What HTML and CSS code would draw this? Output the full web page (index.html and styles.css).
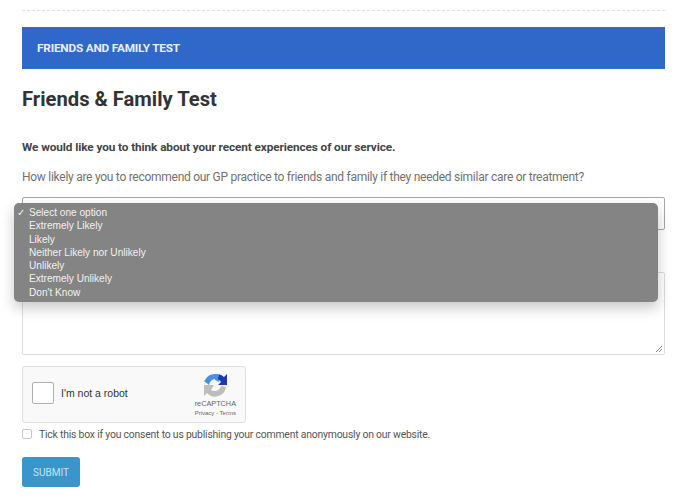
FILE: index.html
```html
<!DOCTYPE html>
<html lang="en">
<head>
  <meta charset="UTF-8">
  <title>Friends and Family Test</title>
  <link rel="stylesheet" href="styles.css">
</head>
<body>
  <div class="page">
    <div class="divider"></div>
    <div class="banner">FRIENDS AND FAMILY TEST</div>
    <h1>Friends &amp; Family Test</h1>
    <p class="intro">We would like you to think about your recent experiences of our service.</p>
    <p class="question">How likely are you to recommend our GP practice to friends and family if they needed similar care or treatment?</p>

    <div class="select-wrap">
      <div class="select-box"></div>
      <!-- native select menu, open -->
      <ul class="menu">
        <li class="checked">Select one option</li>
        <li>Extremely Likely</li>
        <li>Likely</li>
        <li>Neither Likely nor Unlikely</li>
        <li>Unlikely</li>
        <li>Extremely Unlikely</li>
        <li>Don't Know</li>
      </ul>
    </div>

    <div class="comment">
      <svg class="grip" width="8" height="8" viewBox="0 0 8 8">
        <path d="M1 7 L7 1 M4 7 L7 4" stroke="#8a8a8a" stroke-width="1" fill="none"/>
      </svg>
    </div>

    <div class="captcha">
      <span class="captcha-box"></span>
      <span class="captcha-label">I'm not a robot</span>
      <div class="captcha-brand">
        <svg width="24" height="24" viewBox="0 0 24 24">
          <path d="M12 1 A11 11 0 0 0 2 7 L1 8 L6 12 A6.5 6.5 0 0 1 12 6 L12 7 L16 9 L17 6 L20 3 A11 11 0 0 0 12 1 Z" fill="#4a90e2"/>
          <path d="M15 6 A7 7 0 0 1 18 9 L15 12 H24 V1 L21 4 A11 11 0 0 0 16 1.5 Z" fill="#1c3aa9"/>
          <path d="M1 12 V23 L4 20 A11 11 0 0 0 23 14 L18 13 A6.5 6.5 0 0 1 8 17 L11 12 Z" fill="#bdbdbd"/>
        </svg>
        <span class="brand-name">reCAPTCHA</span>
        <span class="brand-links">Privacy - Terms</span>
      </div>
    </div>

    <label class="consent">
      <span class="tick"></span>
      Tick this box if you consent to us publishing your comment anonymously on our website.
    </label>

    <button class="submit">SUBMIT</button>
  </div>
</body>
</html>
```

FILE: styles.css
```css
html, body {
  margin: 0;
  padding: 0;
  background: #fff;
}

body {
  font-family: "Roboto", "Liberation Sans", sans-serif;
  color: #333;
}

.page {
  padding: 10px 23px 0 22px;
  height: 489px;
  overflow: hidden;
}

.divider {
  border-top: 1px dashed #e2e2e2;
}

.banner {
  margin-top: 16px;
  height: 42px;
  line-height: 43px;
  padding-left: 15px;
  background: #3068c9;
  color: #e6eefb;
  font-size: 11.8px;
  font-weight: 700;
  letter-spacing: -0.2px;
}

h1 {
  margin: 17px 0 0 0;
  font-size: 20.2px;
  line-height: 26px;
  font-weight: 700;
  color: #333;
}

.intro {
  margin: 27px 0 0 0;
  font-size: 11.8px;
  line-height: 16px;
  font-weight: 700;
  letter-spacing: -0.1px;
  color: #444;
}

.question {
  margin: 14px 0 0 0;
  font-size: 12px;
  line-height: 16px;
  letter-spacing: -0.27px;
  color: #717171;
}

.select-wrap {
  position: relative;
  margin-top: 12px;
}

.select-box {
  height: 31px;
  border: 1px solid #a8a8a8;
  border-radius: 2px;
}

.menu {
  position: absolute;
  left: -8px;
  top: 6px;
  width: 644px;
  height: 99px;
  box-sizing: border-box;
  margin: 0;
  padding: 3px 0 0 15px;
  list-style: none;
  background: #848484;
  border-radius: 5px;
  box-shadow: 0 6px 14px rgba(0, 0, 0, 0.22);
  color: #f2f2f2;
  font-family: "Liberation Sans", sans-serif;
  font-size: 10.1px;
  line-height: 13.3px;
  z-index: 2;
}

.menu .checked {
  position: relative;
}

.menu .checked::before {
  content: "✓";
  position: absolute;
  left: -12px;
  font-family: "DejaVu Sans", sans-serif;
  font-size: 10px;
  font-weight: 700;
}

.comment {
  position: relative;
  margin-top: 42px;
  height: 81px;
  border: 1px solid #dcdcdc;
  border-radius: 2px;
}

.grip {
  position: absolute;
  right: 1px;
  bottom: 1px;
}

.captcha {
  display: flex;
  align-items: center;
  margin-top: 11px;
  width: 224px;
  height: 57px;
  box-sizing: border-box;
  border: 1px solid #dfdfdf;
  border-radius: 3px;
  background: #f9f9f9;
  padding: 0 9px 3px 9px;
}

.captcha-box {
  width: 20px;
  height: 20px;
  border: 1px solid #b0b0b0;
  border-radius: 2px;
  background: #fff;
}

.captcha-label {
  margin-left: 7px;
  font-family: "Liberation Sans", sans-serif;
  font-size: 10.5px;
  color: #333;
}

.captcha-brand {
  margin: 3px 0 0 auto;
  display: flex;
  flex-direction: column;
  align-items: center;
  color: #666;
}

.brand-name {
  margin-top: 2px;
  font-family: "Liberation Sans", sans-serif;
  font-size: 7.3px;
  line-height: 9px;
}

.brand-links {
  margin-top: 1px;
  font-family: "Liberation Sans", sans-serif;
  font-size: 6px;
  line-height: 8px;
}

.consent {
  display: flex;
  align-items: center;
  gap: 7px;
  margin-top: 3px;
  height: 16px;
  font-size: 10.4px;
  letter-spacing: -0.2px;
  color: #555;
}

.tick {
  width: 8px;
  height: 8px;
  border: 1px solid #c8c8c8;
  border-radius: 2px;
  background: #fff;
}

.submit {
  display: block;
  margin-top: 15px;
  width: 58px;
  height: 30px;
  padding: 0;
  border: 0;
  border-radius: 3px;
  background: #3a96ca;
  color: #c5e3f4;
  font-family: "Roboto", sans-serif;
  font-size: 10px;
}
```
